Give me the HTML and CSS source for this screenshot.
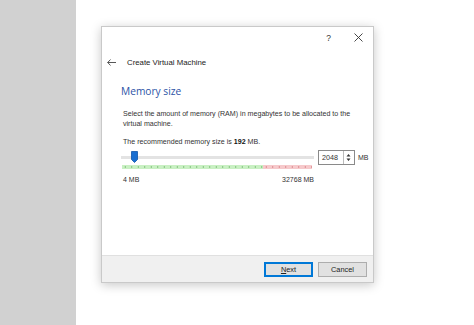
FILE: index.html
```html
<!DOCTYPE html>
<html>
<head>
<meta charset="utf-8">
<link rel="stylesheet" href="styles.css">
</head>
<body>
<div class="page">
  <div class="strip"></div>
  <div class="stage">
    <div class="dialog">
      <div class="titlebar">
        <span class="help">?</span>
        <svg class="close" width="9" height="9" viewBox="0 0 9 9"><path d="M0.5 0.5L8.5 8.5M8.5 0.5L0.5 8.5" stroke="#333" stroke-width="0.9" fill="none"/></svg>
      </div>
      <div class="header">
        <svg class="back" width="9" height="7" viewBox="0 0 9 7"><path d="M3.5 0.5L0.7 3.5L3.5 6.5M0.7 3.5H9" stroke="#444" stroke-width="0.9" fill="none"/></svg>
        <span class="htitle">Create Virtual Machine</span>
      </div>
      <div class="content">
        <div class="heading">Memory size</div>
        <p class="desc">Select the amount of memory (RAM) in megabytes to be allocated to the virtual machine.</p>
        <p class="rec">The recommended memory size is <b>192</b> MB.</p>
        <div class="sliderrow">
          <div class="slidercol">
            <div class="track">
              <div class="handle"><svg width="7" height="12" viewBox="0 0 7 12"><path d="M0.5 0.5H6.5V8.5L3.5 11.5L0.5 8.5Z" fill="#1a6fd1" stroke="#0f56a8" stroke-width="0.8"/></svg></div>
            </div>
            <div class="ticks"><div class="green"></div><div class="red"></div></div>
            <div class="labels"><span>4 MB</span><span>32768 MB</span></div>
          </div>
          <div class="spin">
            <span class="val">2048</span>
            <span class="arrows"><svg width="5" height="9" viewBox="0 0 5 9"><path d="M0.5 3.5L2.5 1L4.5 3.5Z M0.5 5.5L2.5 8L4.5 5.5Z" fill="#333"/></svg></span>
          </div>
          <span class="unit">MB</span>
        </div>
      </div>
      <div class="footer">
        <button class="btn primary"><u>N</u>ext</button>
        <button class="btn">Cancel</button>
      </div>
    </div>
  </div>
</div>
</body>
</html>
```
FILE: styles.css
```css
html, body { margin: 0; padding: 0; background: #fff; }
body { font-family: "Liberation Sans", Arial, sans-serif; color: #222; }
.page { display: flex; width: 474px; height: 325px; }
.strip { width: 76px; background: #d1d1d1; flex: none; }
.stage { flex: 1; padding: 26px 0 0 25px; }
.dialog {
  width: 273px; height: 257px; box-sizing: border-box;
  border: 1px solid #c9c9c9; background: #fff;
  box-shadow: 0 2px 10px rgba(0,0,0,0.22);
  display: flex; flex-direction: column;
}
.titlebar { height: 21px; display: flex; align-items: center; justify-content: flex-end; padding-right: 10px; gap: 23px; }
.help { font-size: 8.5px; color: #333; }
.close { display: block; }
.header { height: 28px; display: flex; align-items: center; padding-left: 5px; }
.back { margin-right: 11px; }
.htitle { font-size: 7.8px; color: #222; }
.content { padding-left: 19px; padding-right: 4px; flex: 1; }
.heading { font-family: "Open Sans", sans-serif; font-size: 10.2px; color: #2c53a6; margin-top: 7px; line-height: 16px; }
.desc { font-size: 7.1px; line-height: 9.5px; margin: 11px 0 0 2px; color: #333; width: 240px; }
.rec { font-size: 7.1px; line-height: 10px; margin: 8px 0 0 2px; color: #333; }
.rec b { font-weight: bold; color: #111; }
.sliderrow { display: flex; align-items: flex-start; margin-top: 3px; }
.slidercol { width: 193px; flex: none; }
.track { height: 3px; background: #e3e3e3; margin-top: 6px; position: relative; }
.handle { position: absolute; left: 10px; top: -5px; }
.handle svg { display: block; }
.ticks { display: flex; height: 4px; margin: 6px 2px 0 1px; }
.green { width: 141px; background: #c9f0c3 repeating-linear-gradient(90deg, transparent 0 3px, #7fbf7a 3px 4px, transparent 4px 6px); background-size: 6.5px 2px; background-repeat: repeat-x; background-position: 0 1px; }
.red { flex: 1; background: #f6c9cb repeating-linear-gradient(90deg, transparent 0 3px, #d9898d 3px 4px, transparent 4px 6px); background-size: 6.5px 2px; background-repeat: repeat-x; background-position: 0 1px; }
.labels { display: flex; justify-content: space-between; font-size: 7px; margin-top: 7px; padding-left: 2px; color: #333; }
.spin { flex: none; margin-left: 4px; width: 37px; height: 15px; box-sizing: border-box; border: 1px solid #8a8a8a; display: flex; align-items: center; justify-content: space-between; padding-left: 3px; font-size: 7.2px; color: #333; }
.arrows { width: 9px; height: 13px; border-left: 1px solid #bbb; display: flex; align-items: center; justify-content: center; margin-right: 1px; }
.arrows svg { display: block; }
.unit { font-size: 7px; margin-left: 3px; margin-top: 4px; color: #333; }
.footer { height: 27px; background: #f0f0f0; border-top: 1px solid #e0e0e0; display: flex; align-items: center; justify-content: flex-end; padding-right: 6px; gap: 5px; box-sizing: border-box; }
.btn { width: 49px; height: 15px; box-sizing: border-box; border: 1px solid #adadad; background: #e1e1e1; font-family: "Liberation Sans", Arial, sans-serif; font-size: 7.4px; color: #222; padding: 0; }
.btn.primary { border: 1px solid #0078d7; box-shadow: inset 0 0 0 1px #0078d7; }
```
